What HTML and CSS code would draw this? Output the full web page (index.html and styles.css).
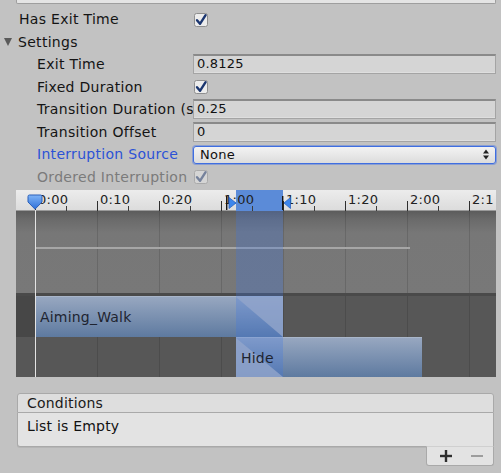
FILE: index.html
```html
<!DOCTYPE html>
<html>
<head>
<meta charset="utf-8">
<link rel="stylesheet" href="styles.css">
</head>
<body>
<div class="topbar"></div>
<div class="props">
  <div class="row">
    <span class="label">Has Exit Time</span>
    <span class="val"><svg class="cb" viewBox="0 0 14 14"><rect x="0.5" y="0.5" width="13" height="13" rx="2" class="cb-box"/><path d="M3 7.2 L6 10.8 L11.6 2.2" class="cb-check"/></svg></span>
  </div>
  <div class="row">
    <span class="label fold"><span class="tri"></span>Settings</span>
    <span class="val"></span>
  </div>
  <div class="row">
    <span class="label sub">Exit Time</span>
    <span class="val"><span class="field">0.8125</span></span>
  </div>
  <div class="row">
    <span class="label sub">Fixed Duration</span>
    <span class="val"><svg class="cb" viewBox="0 0 14 14"><rect x="0.5" y="0.5" width="13" height="13" rx="2" class="cb-box"/><path d="M3 7.2 L6 10.8 L11.6 2.2" class="cb-check"/></svg></span>
  </div>
  <div class="row">
    <span class="label sub">Transition Duration (s)</span>
    <span class="val"><span class="field">0.25</span></span>
  </div>
  <div class="row">
    <span class="label sub">Transition Offset</span>
    <span class="val"><span class="field">0</span></span>
  </div>
  <div class="row">
    <span class="label sub focus">Interruption Source</span>
    <span class="val"><span class="dropdown"><span>None</span><svg class="updown" viewBox="0 0 6 11"><path d="M0 4.5 L3 0.5 L6 4.5 Z M0 6.5 L6 6.5 L3 10.5 Z"/></svg></span></span>
  </div>
  <div class="row">
    <span class="label sub dis">Ordered Interruption</span>
    <span class="val"><svg class="cb off" viewBox="0 0 14 14"><rect x="0.5" y="0.5" width="13" height="13" rx="2" class="cb-box"/><path d="M3 7.2 L6 10.8 L11.6 2.2" class="cb-check"/></svg></span>
  </div>
</div>

<div class="timeline">
  <div class="ruler">
    <div class="tr-band"></div>
    <div class="ticks"></div>
    <div class="rlabels">
      <span>0:00</span><span>0:10</span><span>0:20</span><span>1:00</span><span>1:10</span><span>1:20</span><span>2:00</span><span class="last">2:1</span>
    </div>
    <svg class="playhead" viewBox="0 0 16 16">
      <defs>
        <linearGradient id="pg" x1="0" y1="0" x2="0" y2="1">
          <stop offset="0" stop-color="#7fb4f7"/>
          <stop offset="1" stop-color="#2d6fd8"/>
        </linearGradient>
      </defs>
      <path d="M2.5 1 H13.5 Q15 1 15 2.5 V8 L8 15.2 L1 8 V2.5 Q1 1 2.5 1 Z" fill="url(#pg)" stroke="#2a5fb8" stroke-width="1"/>
    </svg>
    <svg class="mk-start" viewBox="0 0 11 14"><rect x="0" y="0" width="1.4" height="14" fill="#151515"/><path d="M3 1.5 L10 7 L3 12.5 Z" fill="#3d86ec" stroke="#2a62c0" stroke-width="0.8"/></svg>
    <svg class="mk-end" viewBox="0 0 9 14"><rect x="0" y="0" width="1.4" height="14" fill="#151515"/><path d="M8.5 1.5 L2 7 L8.5 12.5 Z" fill="#3d86ec" stroke="#2a62c0" stroke-width="0.8"/></svg>
  </div>
  <div class="graph">
    <div class="curve"></div>
  </div>
  <div class="sep"></div>
  <div class="clips">
    <div class="lead"></div>
    <div class="clip src">
      <span class="clip-name">Aiming_Walk</span>
      <svg class="fade fade-out" viewBox="0 0 47 41" preserveAspectRatio="none"><path d="M0 0 L47 0 L47 41 Z"/></svg>
    </div>
    <div class="clip dst">
      <span class="clip-name">Hide</span>
      <svg class="fade fade-in" viewBox="0 0 47 40" preserveAspectRatio="none"><path d="M0 0 L47 40 L0 40 Z"/></svg>
    </div>
  </div>
  <div class="tr-overlay"></div>
  <div class="playline"></div>
</div>

<div class="cond">
  <div class="cond-head">Conditions</div>
  <div class="cond-body">List is Empty</div>
  <div class="cond-foot">
    <svg class="pm" viewBox="0 0 12 12"><rect x="0" y="4.8" width="12" height="2.4" fill="#2e2e2e"/><rect x="4.8" y="0" width="2.4" height="12" fill="#2e2e2e"/></svg>
    <svg class="pm" viewBox="0 0 12 12"><rect x="0" y="5" width="12" height="2" fill="#9d9d9d"/></svg>
  </div>
</div>
</body>
</html>
```
FILE: styles.css
```css
* { box-sizing: border-box; }

html, body {
  margin: 0;
  padding: 0;
}

body {
  width: 501px;
  height: 473px;
  overflow: hidden;
  background: #c2c2c2;
  font-family: "DejaVu Sans", "Noto Sans", sans-serif;
  font-size: 14px;
  color: #111;
}

.topbar {
  margin-left: 16px;
  width: 480px;
  height: 4px;
  background: #e4e4e4;
  border: 1px solid #9e9e9e;
  border-top: none;
  border-radius: 0 0 2px 2px;
}

.props {
  margin-top: 4px;
}

.row {
  display: grid;
  grid-template-columns: 193px 303px;
  height: 22.5px;
  align-items: center;
}

.label {
  white-space: nowrap;
  overflow: hidden;
  padding-left: 19px;
  letter-spacing: 0.3px;
  color: #141414;
}

.label.sub { padding-left: 37px; }

.label.fold {
  padding-left: 4px;
  display: flex;
  align-items: center;
}

.tri {
  width: 0;
  height: 0;
  border-left: 4.5px solid transparent;
  border-right: 4.5px solid transparent;
  border-top: 8px solid #5a5a5a;
  margin-right: 6px;
}

.label.focus { color: #2c52d6; }
.label.dis { color: #7b7b7b; }

.val {
  display: flex;
  align-items: center;
}

.cb {
  width: 14px;
  height: 14px;
  margin-left: 1px;
  margin-top: 1px;
  display: block;
  overflow: visible;
}

.cb-box {
  fill: #ececec;
  stroke: #8f8f8f;
  stroke-width: 1;
}

.cb-check {
  fill: none;
  stroke: #1b3670;
  stroke-width: 2.4;
  stroke-linecap: round;
  stroke-linejoin: round;
}

.cb.off { opacity: 0.45; }

.field {
  display: block;
  width: 303px;
  height: 20px;
  background: #d5d5d5;
  border: 1px solid #a4a4a4;
  border-top: 2px solid #8a8a8a;
  box-shadow: inset 0 -1px 0 #dedede;
  padding-left: 3px;
  font-size: 13px;
  line-height: 16px;
  letter-spacing: 0.2px;
  color: #111;
}

.dropdown {
  display: flex;
  align-items: center;
  justify-content: space-between;
  width: 303px;
  height: 18px;
  margin-top: 1px;
  padding: 0 6px 0 6px;
  background: linear-gradient(#f3f3f3, #dcdcdc);
  border: 1px solid #3f6ee0;
  box-shadow: 0 0 0 1px rgba(70, 115, 230, 0.45);
  border-radius: 3px;
  font-size: 13px;
  letter-spacing: 0.3px;
  color: #111;
}

.updown {
  width: 6px;
  height: 11px;
  fill: #222;
}

/* ---------- timeline ---------- */

.timeline {
  position: relative;
  margin: 2px 0 0 16px;
  width: 480px;
  height: 187px;
  overflow: hidden;
  display: flex;
  flex-direction: column;
}

.ruler {
  position: relative;
  height: 21px;
  flex: none;
  background: linear-gradient(#ececec, #dcdcdc);
  border-bottom: 1px solid #9a9a9a;
}

.tr-band {
  position: absolute;
  left: 220px;
  top: 0;
  width: 47px;
  height: 21px;
  background: #5b8bd8;
}

.ticks {
  position: absolute;
  inset: 0 0 -1px 0;
  background-image:
    linear-gradient(90deg, #2e2e2e 0 1px, transparent 1px),
    linear-gradient(90deg, #3c3c3c 0 1px, transparent 1px);
  background-size: 62px 10px, 62px 5px;
  background-position: 19px 100%, 50px 100%;
  background-repeat: repeat-x, repeat-x;
}

.rlabels {
  position: relative;
  display: flex;
  padding-left: 22px;
  height: 19px;
  font-size: 13px;
  line-height: 19px;
  letter-spacing: 0.3px;
  color: #222;
  white-space: nowrap;
}

.rlabels span {
  flex: none;
  width: 62px;
}

.rlabels span.last {
  width: 21px;
}

.playhead {
  position: absolute;
  left: 11px;
  top: 4px;
  width: 16px;
  height: 16px;
}

.mk-start {
  position: absolute;
  left: 210px;
  top: 6px;
  width: 11px;
  height: 14px;
}

.mk-end {
  position: absolute;
  left: 266px;
  top: 6px;
  width: 9px;
  height: 14px;
}

.graph {
  position: relative;
  height: 82px;
  flex: none;
  background-color: #787878;
  background-image:
    linear-gradient(90deg, rgba(0, 0, 0, 0.13) 0 1px, transparent 1px),
    linear-gradient(#5c5c5c 0, #6a6a6a 8px, #777 22px, #787878);
  background-size: 62px 100%, 100% 100%;
  background-position: 19px 0, 0 0;
  background-repeat: repeat-x, no-repeat;
}

.curve {
  position: absolute;
  left: 19px;
  top: 36px;
  width: 375px;
  height: 2px;
  background: #a6a6a6;
}

.sep {
  height: 3px;
  flex: none;
  background: #4a4a4a;
}

.clips {
  position: relative;
  height: 81px;
  flex: none;
  background-color: #575757;
  background-image: linear-gradient(90deg, rgba(0, 0, 0, 0.12) 0 1px, transparent 1px);
  background-size: 62px 100%;
  background-position: 19px 0;
  background-repeat: repeat-x;
}

.lead {
  position: absolute;
  left: 0;
  top: 0;
  width: 19px;
  height: 41px;
  background: #474747;
}

.clip {
  position: absolute;
  display: flex;
  align-items: center;
  padding-left: 5px;
  background: linear-gradient(#97a7c0, #5e7aa0);
  border-top: 1px solid #a9b6ca;
  color: #1e2430;
  font-size: 14px;
  letter-spacing: 0.2px;
  overflow: hidden;
}

.clip.src {
  left: 19px;
  top: 0;
  width: 248px;
  height: 41px;
}

.clip.dst {
  left: 220px;
  top: 41px;
  width: 186px;
  height: 40px;
}

.clip-name {
  position: relative;
  z-index: 1;
}

.fade {
  position: absolute;
  top: 0;
  width: 47px;
  height: 100%;
}

.fade path { fill: rgba(180, 184, 192, 0.8); }

.fade-out { right: 0; }
.fade-in { left: 0; }

.tr-overlay {
  position: absolute;
  left: 220px;
  top: 21px;
  width: 47px;
  bottom: 0;
  background: rgba(60, 120, 230, 0.28);
}

.playline {
  position: absolute;
  left: 19px;
  top: 20px;
  bottom: 0;
  width: 1px;
  background: #e4e4e4;
}

/* ---------- conditions ---------- */

.cond {
  margin: 16px 0 0 17px;
  width: 477px;
}

.cond-head {
  height: 20px;
  padding-left: 9px;
  background: #dedede;
  border: 1px solid #a9a9a9;
  border-radius: 3px 3px 0 0;
  line-height: 18px;
  letter-spacing: 0.2px;
  color: #1a1a1a;
}

.cond-body {
  height: 34px;
  padding: 4px 0 0 9px;
  background: #e3e3e3;
  border: 1px solid #a9a9a9;
  border-top: none;
  border-radius: 0 0 0 3px;
  line-height: 18px;
  letter-spacing: 0.2px;
  color: #111;
  box-shadow: 0 1px 0 #b5b5b5;
}

.cond-foot {
  display: flex;
  align-items: center;
  gap: 19px;
  margin-left: 409px;
  margin-top: -1px;
  width: 68px;
  height: 20px;
  padding-left: 13px;
  background: #e3e3e3;
  border: 1px solid #a9a9a9;
  border-top: 1px solid #d0d0d0;
  border-radius: 0 0 3px 3px;
}

.pm {
  width: 12px;
  height: 12px;
  display: block;
}
```
